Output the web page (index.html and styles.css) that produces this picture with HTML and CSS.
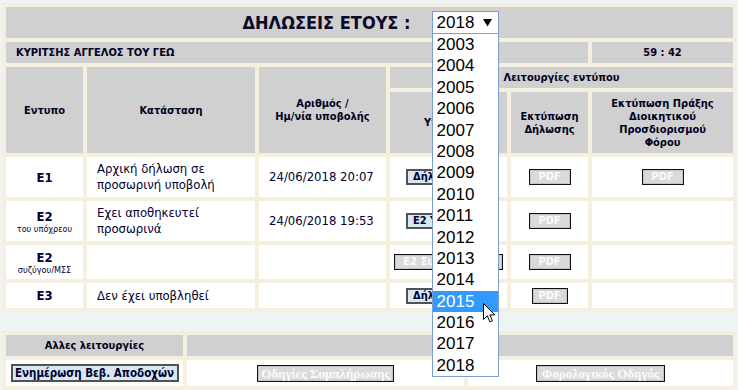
FILE: index.html
```html
<!DOCTYPE html>
<html lang="el">
<head>
<meta charset="utf-8">
<title>Δηλώσεις έτους</title>
<link rel="stylesheet" href="styles.css">
</head>
<body>
<table class="main">
  <colgroup>
    <col class="c1"><col class="c2"><col class="c3"><col class="c4"><col class="c5"><col class="c6">
  </colgroup>
  <tr class="r-title">
    <td colspan="6" class="gray">
      <div class="title-wrap">
        <span class="title-text">ΔΗΛΩΣΕΙΣ ΕΤΟΥΣ :</span>
        <div class="select">
          <span class="select-value">2018</span>
          <svg class="select-arrow" width="9" height="8" viewBox="0 0 9 8"><polygon points="0,0 9,0 4.5,7.5" fill="#000"/></svg>
          <ul class="dropdown">
            <li>2003</li><li>2004</li><li>2005</li><li>2006</li>
            <li>2007</li><li>2008</li><li>2009</li><li>2010</li>
            <li>2011</li><li>2012</li><li>2013</li><li>2014</li>
            <li class="sel">2015</li><li>2016</li><li>2017</li><li>2018</li>
          </ul>
        </div>
      </div>
    </td>
  </tr>
  <tr class="r-name">
    <td colspan="5" class="gray name">ΚΥΡΙΤΣΗΣ ΑΓΓΕΛΟΣ ΤΟΥ ΓΕΩ</td>
    <td class="gray timer">59 : 42</td>
  </tr>
  <tr class="r-h1">
    <th rowspan="2">Εντυπο</th>
    <th rowspan="2">Κατάσταση</th>
    <th rowspan="2">Αριθμός /<br>Ημ/νία υποβολής</th>
    <th colspan="3">Λειτουργίες εντύπου</th>
  </tr>
  <tr class="r-h2">
    <th>Υποβολή</th>
    <th>Εκτύπωση<br>Δήλωσης</th>
    <th>Εκτύπωση Πράξης<br>Διοικητικού<br>Προσδιορισμού<br>Φόρου</th>
  </tr>
  <tr class="r-d1">
    <td class="form"><div class="form-code">E1</div></td>
    <td class="txt">Αρχική δήλωση σε<br>προσωρινή υποβολή</td>
    <td class="txt">24/06/2018 20:07</td>
    <td class="ctr"><span class="btn btn-on w85">Δήλωση Ε1</span></td>
    <td class="ctr"><span class="btn btn-off w42">PDF</span></td>
    <td class="ctr"><span class="btn btn-off w42">PDF</span></td>
  </tr>
  <tr class="r-d2">
    <td class="form"><div class="form-code">E2</div><div class="form-sub">του υπόχρεου</div></td>
    <td class="txt">Εχει αποθηκευτεί<br>προσωρινά</td>
    <td class="txt">24/06/2018 19:53</td>
    <td class="ctr"><span class="btn btn-on w85">E2 Υπόχρεου</span></td>
    <td class="ctr"><span class="btn btn-off w42">PDF</span></td>
    <td></td>
  </tr>
  <tr class="r-d3">
    <td class="form"><div class="form-code">E2</div><div class="form-sub">συζύγου/ΜΣΣ</div></td>
    <td></td>
    <td></td>
    <td class="ctr"><span class="btn btn-off w109">E2 Συζύγου/ΜΣΣ</span></td>
    <td class="ctr"><span class="btn btn-off w42">PDF</span></td>
    <td></td>
  </tr>
  <tr class="r-d4">
    <td class="form"><div class="form-code">E3</div></td>
    <td class="txt">Δεν έχει υποβληθεί</td>
    <td></td>
    <td class="ctr"><span class="btn btn-on w85">Δήλωση Ε3</span></td>
    <td class="ctr"><span class="btn btn-off w36">PDF</span></td>
    <td></td>
  </tr>
</table>

<table class="other">
  <colgroup>
    <col class="o1"><col class="o2"><col class="o3">
  </colgroup>
  <tr class="r-oh">
    <th>Αλλες λειτουργίες</th>
    <th colspan="2"></th>
  </tr>
  <tr class="r-ob">
    <td class="ctr"><span class="btn btn-on w168">Ενημέρωση Βεβ. Αποδοχών</span></td>
    <td class="ctr"><span class="btn btn-off serif w137">Οδηγίες Συμπλήρωσης</span></td>
    <td class="ctr"><span class="btn btn-off serif w129">Φορολογικός Οδηγός</span></td>
  </tr>
</table>

<svg class="cursor" width="14" height="21" viewBox="0 0 14 21">
  <path d="M0.5 0.5 L0.5 16.5 L4.3 12.8 L6.9 18.9 L9.4 17.9 L6.9 11.9 L11.8 11.9 Z" fill="#fff" stroke="#000" stroke-width="1" stroke-linejoin="miter"/>
</svg>
</body>
</html>
```

FILE: styles.css
```css
html, body {
  margin: 0;
  padding: 0;
}

body {
  background: #eef3f3;
  padding: 3px 0 0 2px;
  color: #000033;
  font-family: "DejaVu Sans Condensed", "Liberation Sans", sans-serif;
  font-size: 13px;
  position: relative;
  width: 736px;
  height: 387px;
  overflow: hidden;
}

table {
  border-collapse: separate;
  border-spacing: 4px;
  background: #f4efde;
  table-layout: fixed;
  width: 735px;
}

td, th {
  padding: 0;
  background: #ffffff;
  vertical-align: middle;
}

th {
  background: #d0d0d0;
  font-weight: bold;
  font-size: 11px;
  line-height: 13px;
  text-align: center;
  color: #000022;
}

.gray {
  background: #d0d0d0;
}

col.c1 { width: 77px; }
col.c2 { width: 168px; }
col.c3 { width: 127px; }
col.c4 { width: 117px; }
col.c5 { width: 77px; }
col.c6 { width: 141px; }

.r-title td { height: 31px; }
.r-name td { height: 21px; }
.r-h1 th { height: 21px; }
.r-h2 th { height: 61px; }
.r-d1 td { height: 40px; }
.r-d2 td { height: 40px; }
.r-d3 td { height: 34px; }
.r-d4 td { height: 25px; }

/* Title row */
.title-wrap {
  display: flex;
  justify-content: center;
  align-items: center;
  gap: 21px;
  padding-left: 2px;
}

.title-text {
  font-size: 18px;
  font-weight: bold;
  color: #0a0a2a;
}

.select {
  position: relative;
  box-sizing: border-box;
  width: 67px;
  height: 23px;
  background: #fff;
  border: 1px solid #7a9cd6;
  font-family: "Liberation Sans", Arial, sans-serif;
  font-size: 17px;
  line-height: 21px;
  color: #000;
  padding-left: 4px;
}

.select-arrow {
  position: absolute;
  left: 50px;
  top: 7px;
}

.dropdown {
  position: absolute;
  z-index: 10;
  top: 21px;
  left: -1px;
  box-sizing: border-box;
  width: 67px;
  margin: 0;
  padding: 0;
  list-style: none;
  background: #fff;
  border: 1px solid #7d9fd3;
}

.dropdown li {
  height: 21.4px;
  line-height: 21.4px;
  padding-left: 4px;
  color: #000;
}

.dropdown li.sel {
  background: #3399ff;
  color: #fff;
}

/* Name row */
.name {
  font-size: 11px;
  font-weight: bold;
  padding-left: 10px;
  color: #000022;
}

.timer {
  font-size: 11px;
  font-weight: bold;
  text-align: center;
  color: #000022;
}

/* Data rows */
.form {
  text-align: center;
}

.form-code {
  font-size: 13px;
  font-weight: bold;
  line-height: 15px;
}

.form-sub {
  font-size: 9px;
  line-height: 10px;
}

.txt {
  padding-left: 10px;
  line-height: 16px;
}

.ctr {
  text-align: center;
}

/* Buttons */
.btn {
  display: inline-block;
  box-sizing: border-box;
  height: 16px;
  font-size: 11px;
  font-weight: bold;
  line-height: 12px;
  text-align: center;
  vertical-align: middle;
  white-space: nowrap;
  overflow: hidden;
}

.btn-on {
  background: #d6e9f0;
  border: 2px solid #525252;
  color: #000033;
}

.btn-on.w85 {
  text-align: left;
  padding-left: 5px;
}

.btn-off {
  background: #dadada;
  border: 1px solid #111;
  box-shadow: inset 0 0 0 1px #c4c4c4;
  color: #fafafa;
  line-height: 14px;
}

.serif {
  font-family: "Liberation Serif", "Times New Roman", serif;
  font-size: 13px;
  height: 17px;
  line-height: 15px;
}

.w36 { width: 36px; }
.w42 { width: 42px; }
.w85 { width: 85px; }
.w109 { width: 109px; }
.w129 { width: 129px; }
.w137 { width: 137px; }
.w168 { width: 168px; height: 18px; line-height: 14px; font-size: 11.5px; }

/* Other functions table */
.other {
  margin-top: 19px;
}

col.o1 { width: 177px; }
col.o2 { width: 277px; }
col.o3 { width: 265px; }

.r-oh th { height: 21px; }
.r-ob td { height: 26px; }

.cursor {
  position: absolute;
  left: 483px;
  top: 303px;
  z-index: 20;
}
```
